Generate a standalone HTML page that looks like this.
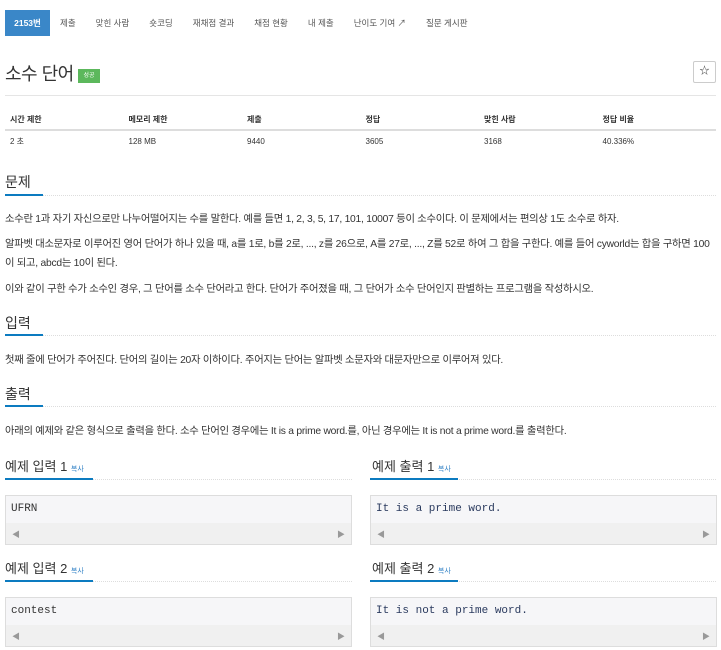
<!DOCTYPE html>
<html><head><meta charset="utf-8"><style>
*{margin:0;padding:0;box-sizing:border-box}
body{width:721px;height:650px;overflow:hidden;background:#fff;font-family:"Liberation Sans","Noto Sans CJK KR",sans-serif;color:#333;font-size:9px;position:relative}
.a{position:absolute}
.nav{top:10px;left:5px;height:26px;display:flex;font-size:8.5px;color:#555}
.nav div{padding:0 10px;line-height:26px}
.nav .on{background:#3a87c8;color:#fff;font-weight:bold;width:45px;padding:0;text-align:center}
h1{position:absolute;top:60px;left:5px;font-size:18px;font-weight:normal;color:#333;letter-spacing:-0.5px}
.badge{position:absolute;top:69px;left:78px;background:#5cb85c;color:#fff;font-size:6px;width:22px;height:14px;text-align:center;line-height:14px}
.star{position:absolute;top:61px;left:693px;width:23px;height:22px;border:1px solid #ccc;border-radius:2px;text-align:center;line-height:20px;font-size:10px}
.line{position:absolute;left:5px;right:5px;height:1px;background:#e5e5e5}
table{position:absolute;top:110px;left:5px;width:711px;border-collapse:collapse;font-size:8px;table-layout:fixed}
th{text-align:left;font-weight:bold;padding:3px 5px;height:20px;border-bottom:2px solid #ddd;color:#333}
td{padding:3px 5px;height:22px}
.h{position:absolute;left:5px;font-size:14px;color:#333}
.hl{position:absolute;left:5px;right:5px;height:1px;border-top:1px dotted #ddd}
.hu{position:absolute;height:2px;background:#0c7bc0}
.p{position:absolute;left:5px;font-size:10.3px;color:#333;line-height:20px;width:716px;letter-spacing:-0.25px;white-space:nowrap}
.sh{position:absolute;font-size:13px;color:#333}
.sh span{font-size:7px;color:#3a87c8}
.box{position:absolute;width:347px;height:50px;border:1px solid #ddd;background:#f6f6f8}
.box pre{font-family:"Liberation Mono",monospace;font-size:11px;padding:7px 5px;height:27px;color:#333}
.box .sb{position:absolute;left:0;right:0;bottom:0;height:21px;background:#f0f0f0;color:#999;font-size:8px}
</style></head><body>
<div class="a nav"><div class="on">2153번</div><div>제출</div><div>맞힌 사람</div><div>숏코딩</div><div>재채점 결과</div><div>채점 현황</div><div>내 제출</div><div>난이도 기여 ↗</div><div>질문 게시판</div></div>
<h1>소수 단어</h1><div class="badge">성공</div><div class="star">☆</div>
<div class="line" style="top:95px"></div>
<table><tr><th>시간 제한</th><th>메모리 제한</th><th>제출</th><th>정답</th><th>맞힌 사람</th><th>정답 비율</th></tr>
<tr><td>2 초</td><td>128 MB</td><td>9440</td><td>3605</td><td>3168</td><td>40.336%</td></tr></table>
<div class="h" style="top:172px">문제</div><div class="hl" style="top:195px"></div><div class="hu" style="top:194px;left:5px;width:38px"></div>
<div class="p" style="top:210px">소수란 1과 자기 자신으로만 나누어떨어지는 수를 말한다. 예를 들면 1, 2, 3, 5, 17, 101, 10007 등이 소수이다. 이 문제에서는 편의상 1도 소수로 하자.</div>
<div class="p" style="top:235px;line-height:19px">알파벳 대소문자로 이루어진 영어 단어가 하나 있을 때, a를 1로, b를 2로, ..., z를 26으로, A를 27로, ..., Z를 52로 하여 그 합을 구한다. 예를 들어 cyworld는 합을 구하면 100<br>이 되고, abcd는 10이 된다.</div>
<div class="p" style="top:280px">이와 같이 구한 수가 소수인 경우, 그 단어를 소수 단어라고 한다. 단어가 주어졌을 때, 그 단어가 소수 단어인지 판별하는 프로그램을 작성하시오.</div>
<div class="h" style="top:313px">입력</div><div class="hl" style="top:335px"></div><div class="hu" style="top:334px;left:5px;width:38px"></div>
<div class="p" style="top:351px">첫째 줄에 단어가 주어진다. 단어의 길이는 20자 이하이다. 주어지는 단어는 알파벳 소문자와 대문자만으로 이루어져 있다.</div>
<div class="h" style="top:384px">출력</div><div class="hl" style="top:406px"></div><div class="hu" style="top:405px;left:5px;width:38px"></div>
<div class="p" style="top:422px">아래의 예제와 같은 형식으로 출력을 한다. 소수 단어인 경우에는 It is a prime word.를, 아닌 경우에는 It is not a prime word.를 출력한다.</div>

<div class="sh" style="top:456px;left:5px">예제 입력 1 <span>복사</span></div>
<div class="hl" style="top:479px;right:369px"></div><div class="hu" style="top:478px;left:5px;width:88px"></div>
<div class="sh" style="top:456px;left:372px">예제 출력 1 <span>복사</span></div>
<div class="hl" style="top:479px;left:370px"></div><div class="hu" style="top:478px;left:370px;width:88px"></div>
<div class="box" style="top:495px;left:5px"><pre>UFRN</pre><div class="sb"><span class="a" style="left:6px;top:6px">◀</span><span class="a" style="right:6px;top:6px">▶</span></div></div>
<div class="box" style="top:495px;left:370px"><pre style="color:#2a3a5e">It is a prime word.</pre><div class="sb"><span class="a" style="left:6px;top:6px">◀</span><span class="a" style="right:6px;top:6px">▶</span></div></div>

<div class="sh" style="top:558px;left:5px">예제 입력 2 <span>복사</span></div>
<div class="hl" style="top:581px;right:369px"></div><div class="hu" style="top:580px;left:5px;width:88px"></div>
<div class="sh" style="top:558px;left:372px">예제 출력 2 <span>복사</span></div>
<div class="hl" style="top:581px;left:370px"></div><div class="hu" style="top:580px;left:370px;width:88px"></div>
<div class="box" style="top:597px;left:5px"><pre>contest</pre><div class="sb"><span class="a" style="left:6px;top:6px">◀</span><span class="a" style="right:6px;top:6px">▶</span></div></div>
<div class="box" style="top:597px;left:370px"><pre style="color:#2a3a5e">It is not a prime word.</pre><div class="sb"><span class="a" style="left:6px;top:6px">◀</span><span class="a" style="right:6px;top:6px">▶</span></div></div>
</body></html>
